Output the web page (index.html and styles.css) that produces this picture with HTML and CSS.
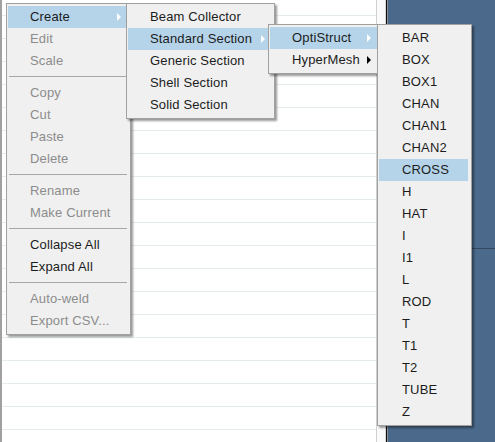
FILE: index.html
```html
<!DOCTYPE html>
<html>
<head>
<meta charset="utf-8">
<link rel="stylesheet" href="styles.css">
</head>
<body>
<div class="screen">
  <div class="list"></div>
  <div class="list-gap"></div>
  <div class="divider"></div>
  <div class="viewport"><div class="vp-line"></div></div>

  <div class="menu m1">
    <div class="item hl sub">Create<span class="arrow white"></span></div>
    <div class="item dis">Edit</div>
    <div class="item dis">Scale</div>
    <div class="sep"></div>
    <div class="item dis">Copy</div>
    <div class="item dis">Cut</div>
    <div class="item dis">Paste</div>
    <div class="item dis">Delete</div>
    <div class="sep"></div>
    <div class="item dis">Rename</div>
    <div class="item dis">Make Current</div>
    <div class="sep"></div>
    <div class="item">Collapse All</div>
    <div class="item">Expand All</div>
    <div class="sep"></div>
    <div class="item dis">Auto-weld</div>
    <div class="item dis">Export CSV...</div>
  </div>

  <div class="menu m2">
    <div class="item">Beam Collector</div>
    <div class="item hl sub">Standard Section<span class="arrow white"></span></div>
    <div class="item">Generic Section</div>
    <div class="item">Shell Section</div>
    <div class="item">Solid Section</div>
  </div>

  <div class="menu m3">
    <div class="item hl sub">OptiStruct<span class="arrow white"></span></div>
    <div class="item sub">HyperMesh<span class="arrow"></span></div>
  </div>

  <div class="menu m4">
    <div class="item">BAR</div>
    <div class="item">BOX</div>
    <div class="item">BOX1</div>
    <div class="item">CHAN</div>
    <div class="item">CHAN1</div>
    <div class="item">CHAN2</div>
    <div class="item hl">CROSS</div>
    <div class="item">H</div>
    <div class="item">HAT</div>
    <div class="item">I</div>
    <div class="item">I1</div>
    <div class="item">L</div>
    <div class="item">ROD</div>
    <div class="item">T</div>
    <div class="item">T1</div>
    <div class="item">T2</div>
    <div class="item">TUBE</div>
    <div class="item">Z</div>
  </div>
</div>
</body>
</html>
```
FILE: styles.css
```css
html, body {
  margin: 0;
  padding: 0;
}
body {
  font-family: "Liberation Sans", Arial, sans-serif;
  font-size: 13px;
  color: #1c1c1c;
}
.screen {
  position: relative;
  width: 495px;
  height: 442px;
  overflow: hidden;
  display: flex;
  background: #fff;
}
.list {
  width: 374px;
  border-left: 2px solid #a0a0a0;
  border-right: 1px solid #cfcfcf;
  background-color: #fff;
  background-image: repeating-linear-gradient(to bottom, transparent 0, transparent 22px, #e4ecee 22px, #e4ecee 23px);
  background-position: 0 -7px;
}
.list-gap {
  width: 8px;
  background: #fbfbfb;
  border-right: 1px solid #d6d6d6;
}
.divider {
  width: 1px;
  background: #111;
  border-right: 1px solid #8a8f96;
}
.viewport {
  flex: 1;
  background: #4b6a8b;
  display: flex;
  flex-direction: column;
}
.vp-line {
  margin-top: 248px;
  height: 1px;
  background: #34485e;
}

.menu {
  position: absolute;
  background: #f0f0f0;
  border: 1px solid #a0a0a0;
  box-shadow: 2px 2px 2px rgba(0, 0, 0, 0.4);
  padding: 2px 3px 2px 1px;
}
.m1 { left: 6px; top: 3px; width: 119px; }
.m2 { left: 126px; top: 3px; width: 143px; }
.m3 { left: 268px; top: 24px; width: 107px; }
.m4 { left: 377px; top: 24px; width: 89px; }

.item {
  height: 22px;
  line-height: 22px;
  padding-left: 22px;
  position: relative;
  white-space: nowrap;
  letter-spacing: 0.15px;
}
.m4 .item { padding-left: 23px; }
.item.dis { color: #8c8c8c; }
.item.hl { background: #b5d4ea; }
.arrow {
  position: absolute;
  right: 6px;
  top: 7px;
  width: 0;
  height: 0;
  border-top: 4px solid transparent;
  border-bottom: 4px solid transparent;
  border-left: 4px solid #000;
}
.arrow.white { border-left-color: #fff; }
.sep {
  height: 10px;
  position: relative;
}
.sep::after {
  content: "";
  position: absolute;
  left: 1px;
  right: 0;
  top: 4px;
  height: 1px;
  background: #a8a8a8;
}
```
